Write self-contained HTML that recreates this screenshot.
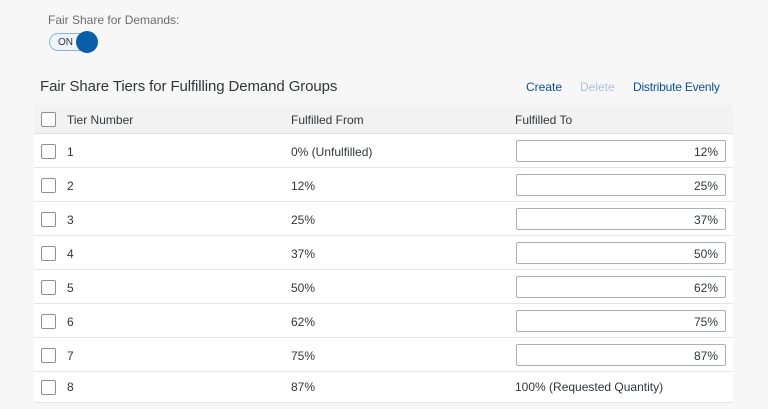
<!DOCTYPE html>
<html><head><style>
body{margin:0;width:768px;height:409px;background:#f7f7f7;font-family:"Liberation Sans",sans-serif;color:#32363a;position:relative;overflow:hidden}
.a{position:absolute}
.lbl{left:48px;top:13px;font-size:12px;color:#6a6d70}
.track{left:49px;top:33px;width:44px;height:18px;border:1px solid #89b4e0;border-radius:10px;background:#eef4fb;box-sizing:border-box}
.track span{position:absolute;left:8px;top:3px;font-size:10px;color:#32363a}
.knob{left:76px;top:31px;width:22px;height:22px;border-radius:50%;background:#0a5ea8}
.title{left:40px;top:78px;font-size:15px;color:#32363a;letter-spacing:-0.1px}
.lnk{top:80px;font-size:12px;color:#0a4f99}
.tbl{left:34px;top:105px;width:699px}
.row{position:relative;height:33px;background:#fff;border-bottom:1px solid #e5e5e5;font-size:12px}
.hdr{height:28px;background:#f2f2f2;border-bottom:1px solid #e0e0e0}
.cb{position:absolute;left:7px;top:10px;width:13px;height:13px;border:1px solid #8d9196;border-radius:2px;background:#fff}
.hdr .cb{top:7px}
.c1,.c2,.c3{position:absolute;top:11px}
.hdr .c1,.hdr .c2,.hdr .c3{top:8px}
.c1{left:33px}.c2{left:257px}.c3{left:481px}
.inp{position:absolute;left:482px;top:6px;width:210px;height:22px;box-sizing:border-box;border:1px solid #aab0b6;border-radius:2px;background:#fff;text-align:right;padding:4px 7px 0 0}
</style></head><body>
<div class="a lbl">Fair Share for Demands:</div>
<div class="a track"><span>ON</span></div>
<div class="a knob"></div>
<div class="a title">Fair Share Tiers for Fulfilling Demand Groups</div>
<div class="a lnk" style="left:526px">Create</div>
<div class="a lnk" style="left:580px;color:#a9c3df">Delete</div>
<div class="a lnk" style="left:633px;letter-spacing:-0.2px">Distribute Evenly</div>
<div class="a tbl">
<div class="row hdr"><div class="cb"></div><div class="c1">Tier Number</div><div class="c2">Fulfilled From</div><div class="c3">Fulfilled To</div></div>
<div class="row"><div class="cb"></div><div class="c1">1</div><div class="c2">0% (Unfulfilled)</div><div class="inp">12%</div></div>
<div class="row"><div class="cb"></div><div class="c1">2</div><div class="c2">12%</div><div class="inp">25%</div></div>
<div class="row"><div class="cb"></div><div class="c1">3</div><div class="c2">25%</div><div class="inp">37%</div></div>
<div class="row"><div class="cb"></div><div class="c1">4</div><div class="c2">37%</div><div class="inp">50%</div></div>
<div class="row"><div class="cb"></div><div class="c1">5</div><div class="c2">50%</div><div class="inp">62%</div></div>
<div class="row"><div class="cb"></div><div class="c1">6</div><div class="c2">62%</div><div class="inp">75%</div></div>
<div class="row"><div class="cb"></div><div class="c1">7</div><div class="c2">75%</div><div class="inp">87%</div></div>
<div class="row" style="height:30px"><div class="cb" style="top:8px"></div><div class="c1" style="top:8px">8</div><div class="c2" style="top:8px">87%</div><div class="c3" style="top:8px">100% (Requested Quantity)</div></div>
</div>
</body></html>
